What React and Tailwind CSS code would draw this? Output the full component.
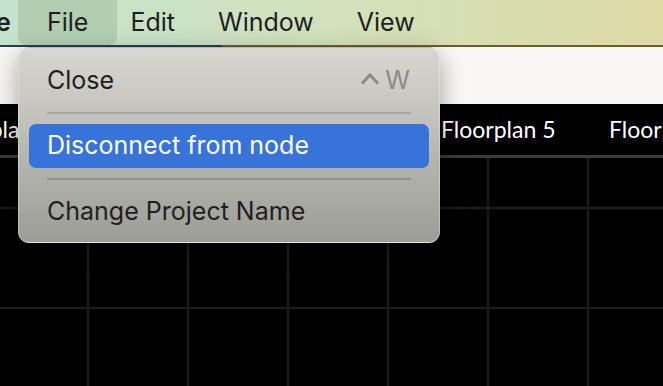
import React from 'react'

const MENUS = ['File', 'Edit', 'Window', 'View']
const TABS = ['Floorplan 2', 'Floorplan 3', 'Floorplan 4', 'Floorplan 5', 'Floorplan 6']

function GridCanvas() {
  const xs = [88, 188, 288, 388, 488, 588]
  const ys = [50, 150]
  return (
    <svg width="663" height="228" className="block">
      {xs.map(x => (
        <line key={x} x1={x} y1="0" x2={x} y2="228" stroke="#1b1b1b" strokeWidth="2.5" />
      ))}
      {ys.map(y => (
        <line key={y} x1="0" y1={y} x2="663" y2={y} stroke="#1b1b1b" strokeWidth="2.5" />
      ))}
    </svg>
  )
}

export default function App() {
  return (
    <div className="relative w-[663px] h-[386px] overflow-hidden bg-black font-['Inter','Noto_Sans',sans-serif]">
      {/* menu bar */}
      <div className="h-[45px] flex items-stretch bg-gradient-to-r from-[#c4e2cf] via-[#d2e1bb] to-[#dddaa6] text-[#1e1e1e] text-[25px]">
        <span className="ml-[-4px] w-[22px] flex items-center font-semibold">e</span>
        {MENUS.map((m, i) => (
          <div
            key={m}
            className={
              i === 0
                ? 'flex items-center px-[29px] rounded-b-lg bg-[#a9c4a6]/70 mr-[13px]'
                : 'flex items-center mr-[43px]'
            }
          >
            {m}
          </div>
        ))}
      </div>
      <div className="flex h-[2px]">
        <div className="w-[222px] bg-[#233f5a]" />
        <div className="flex-1 bg-[#6b5d29]" />
      </div>

      {/* toolbar area */}
      <div className="h-[57px] bg-[#f9f7f3]" />

      {/* tab bar */}
      <div className="h-[54px] bg-black border-b-[3px] border-[#3b3b3b] flex items-center overflow-hidden">
        <div className="flex ml-[-63px] font-['Lato',sans-serif] text-white text-[23px]">
          {TABS.map(t => (
            <div key={t} className="w-[168px] shrink-0">{t}</div>
          ))}
        </div>
      </div>

      <GridCanvas />

      {/* dropdown */}
      <div className="absolute left-[18px] top-[47px] w-[422px] h-[196px] rounded-[11px] bg-gradient-to-b from-[#d9d7d1] to-[#9c9d97] border border-white/30 shadow-[0_8px_24px_rgba(0,0,0,0.35)] px-[10px] pt-[12px] text-[25px]">
        <div className="flex items-center justify-between h-[42px] px-[18px] text-[#1f1f1f]">
          <span>Close</span>
          <span className="text-[#8b8a86] flex items-center gap-[5px] mr-[1px]">
            <svg width="20" height="13" viewBox="0 0 20 13" className="-mt-[6px]">
              <path d="M2 11.5 L10 3 L18 11.5" fill="none" stroke="#8b8a86" strokeWidth="3" />
            </svg>
            W
          </span>
        </div>
        <div className="mx-[18px] my-[10px] h-[2px] bg-[#a9a8a3]" />
        <div className="flex items-center h-[44px] px-[18px] rounded-[7px] bg-[#3873d9] text-white">
          Disconnect from node
        </div>
        <div className="mx-[18px] my-[10px] h-[2px] bg-[#8f8f8a]" />
        <div className="flex items-center h-[44px] px-[18px] text-[#1f1f1f]">
          Change Project Name
        </div>
      </div>
    </div>
  )
}
